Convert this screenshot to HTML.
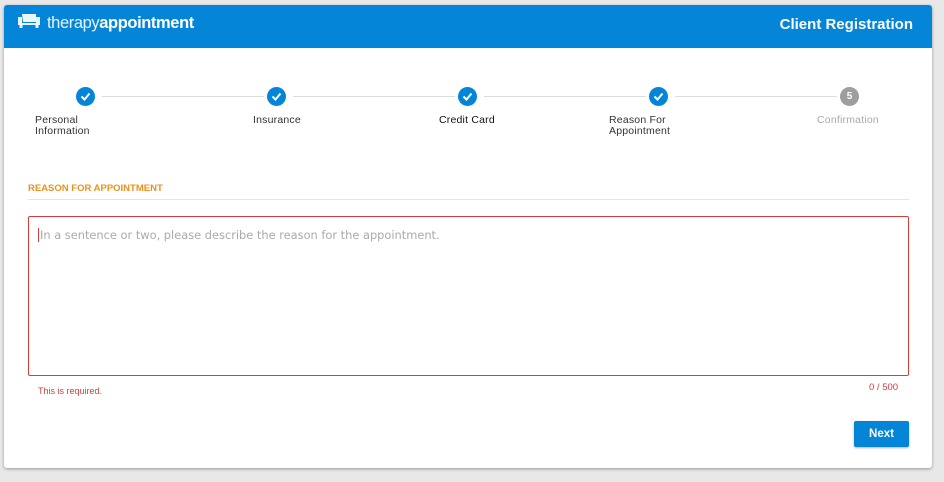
<!DOCTYPE html><html><head><style>
body{margin:0;background:#e8e8e8;width:944px;height:482px;overflow:hidden;font-family:"Liberation Sans","DejaVu Sans",sans-serif;}
.card{position:absolute;left:4px;top:5px;width:928px;height:463px;background:#fff;border-radius:3px;box-shadow:0 1px 3px rgba(0,0,0,.35);overflow:hidden}
.hdr{position:absolute;left:0;top:0;width:928px;height:43px;background:#0585d8;color:#fff}
.logo{position:absolute;left:43px;top:9px;font-size:16.5px;letter-spacing:-0.4px}
.title{position:absolute;right:19px;top:11px;font-size:15px;font-weight:bold}
.c{position:absolute;width:19px;height:19px;border-radius:50%;background:#0585d8;top:82px;color:#fff;text-align:center;font-size:10px;line-height:19px;font-weight:bold}
.c svg{position:absolute;left:4px;top:5px}
.ln{position:absolute;top:91px;height:1px;background:#ddd}
.lb{position:absolute;top:110px;font-size:10.5px;color:#333;line-height:11px;letter-spacing:0.2px}
</style></head><body><div class="card">
<div class="hdr">
<svg style="position:absolute;left:13px;top:8px" width="24" height="16" viewBox="0 0 24 16"><path d="M1 4h4v6h14V4h4v8h-1.5v3h-3v-3H5.5v3h-3v-3H1z M5 1h14v8H6z" fill="#fff" opacity=".92"/></svg>
<div class="logo"><span style="font-weight:300;opacity:.9">therapy</span><b>appointment</b></div>
<div class="title">Client Registration</div></div>
<div class="ln" style="left:98px;width:162px"></div>
<div class="ln" style="left:289px;width:162px"></div>
<div class="ln" style="left:480px;width:162px"></div>
<div class="ln" style="left:671px;width:162px"></div>
<div class="c" style="left:72px"><svg width="11" height="9" viewBox="0 0 11 9"><path d="M1.5 4.5l3 3 5-6" stroke="#fff" stroke-width="2" fill="none"/></svg></div>
<div class="c" style="left:263px"><svg width="11" height="9" viewBox="0 0 11 9"><path d="M1.5 4.5l3 3 5-6" stroke="#fff" stroke-width="2" fill="none"/></svg></div>
<div class="c" style="left:454px"><svg width="11" height="9" viewBox="0 0 11 9"><path d="M1.5 4.5l3 3 5-6" stroke="#fff" stroke-width="2" fill="none"/></svg></div>
<div class="c" style="left:645px"><svg width="11" height="9" viewBox="0 0 11 9"><path d="M1.5 4.5l3 3 5-6" stroke="#fff" stroke-width="2" fill="none"/></svg></div>
<div class="c" style="left:836px;background:#9e9e9e">5</div>
<div class="lb" style="left:31px">Personal<br>Information</div>
<div class="lb" style="left:249px">Insurance</div>
<div class="lb" style="left:435px;color:#111">Credit Card</div>
<div class="lb" style="left:605px">Reason For<br>Appointment</div>
<div class="lb" style="left:813px;color:#aaa">Confirmation</div>
<div style="position:absolute;left:24px;top:178px;font-size:9.5px;font-weight:bold;color:#e8921e">REASON FOR APPOINTMENT</div>
<div style="position:absolute;left:24px;top:194px;width:881px;height:1px;background:#e4e4e4"></div>
<div style="position:absolute;left:24px;top:211px;width:879px;height:158px;border:1px solid #d93b3b;border-radius:2px">
<div style="position:absolute;left:9px;top:11px;font-family:'DejaVu Sans',sans-serif;font-size:11.4px;color:#aaa;border-left:1px solid #d93b3b;padding-left:1px;line-height:14px">In a sentence or two, please describe the reason for the appointment.</div></div>
<div style="position:absolute;left:34px;top:381px;font-size:9px;color:#d93b3b">This is required.</div>
<div style="position:absolute;left:865px;top:377px;font-size:9.5px;color:#d93b3b">0 / 500</div>
<div style="position:absolute;left:850px;top:416px;width:55px;height:26px;background:#0585d8;border-radius:2px;color:#fff;font-size:11.5px;font-weight:bold;text-align:center;line-height:26px;box-shadow:0 1px 2px rgba(0,0,0,.3)">Next</div>
</div></body></html>
